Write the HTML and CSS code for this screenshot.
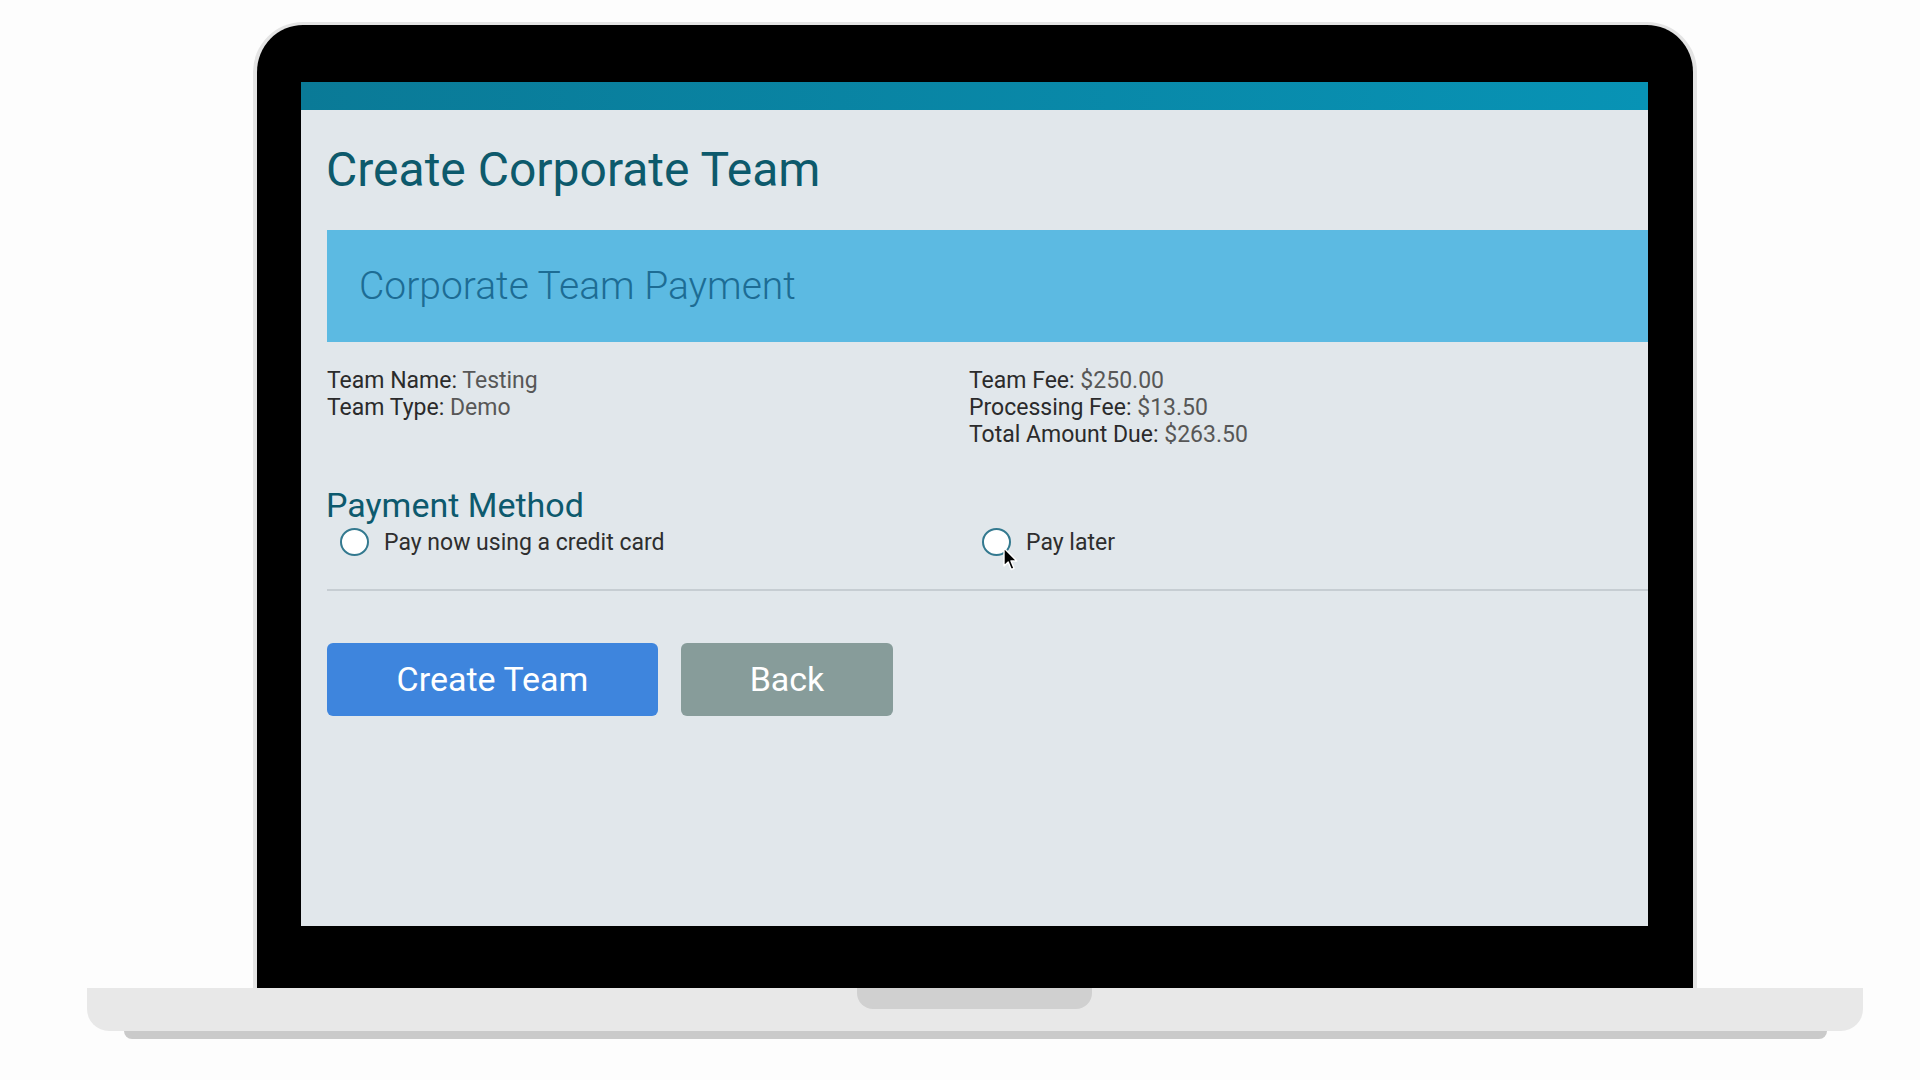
FILE: index.html
```html
<!DOCTYPE html>
<html lang="en">
<head>
<meta charset="utf-8">
<title>Create Corporate Team</title>
<link rel="stylesheet" href="styles.css">
</head>
<body>
<div class="laptop">
  <div class="lid">
    <div class="screen">
      <div class="topbar"></div>
      <main class="content">
        <h1 class="page-title">Create Corporate Team</h1>
        <section class="panel">
          <h2 class="panel-title">Corporate Team Payment</h2>
        </section>
        <div class="summary">
          <div class="summary-col">
            <div class="row"><span class="label">Team Name:</span> <span class="value">Testing</span></div>
            <div class="row"><span class="label">Team Type:</span> <span class="value">Demo</span></div>
          </div>
          <div class="summary-col">
            <div class="row"><span class="label">Team Fee:</span> <span class="value">$250.00</span></div>
            <div class="row"><span class="label">Processing Fee:</span> <span class="value">$13.50</span></div>
            <div class="row"><span class="label">Total Amount Due:</span> <span class="value">$263.50</span></div>
          </div>
        </div>
        <h3 class="method-title">Payment Method</h3>
        <div class="options">
          <label class="option"><span class="radio"></span><span class="option-text">Pay now using a credit card</span></label>
          <label class="option">
            <span class="radio"></span><span class="option-text">Pay later</span>
            <svg class="cursor" width="16" height="25" viewBox="0 0 16 25" aria-hidden="true">
              <path d="M1 1 L1 19 L5.2 15 L8.2 22.5 L11 21.3 L8 14 L13.8 14 Z" fill="#000" stroke="#fff" stroke-width="1.4" stroke-linejoin="round"/>
            </svg>
          </label>
        </div>
        <hr class="divider">
        <div class="actions">
          <button class="btn btn-primary" type="button">Create Team</button>
          <button class="btn btn-secondary" type="button">Back</button>
        </div>
      </main>
    </div>
  </div>
  <div class="base"><div class="notch"></div></div>
  <div class="base-shadow"></div>
</div>
</body>
</html>
```

FILE: styles.css
```css
* { box-sizing: border-box; }

html, body {
  margin: 0;
  padding: 0;
}

body {
  width: 1920px;
  height: 1080px;
  overflow: hidden;
  background: #fdfdfd;
  font-family: Roboto, "Liberation Sans", sans-serif;
}

/* device frame */
.laptop {
  width: 1776px;
  margin-left: 87px;
  padding-top: 22px;
  display: flex;
  flex-direction: column;
}

.lid {
  width: 1444px;
  margin: 0 auto;
  background: #000;
  border: 4px solid #e4e4e4;
  border-top-width: 3px;
  border-bottom: 0;
  border-radius: 50px 50px 0 0;
  padding: 57px 45px 62px 44px;
}

.base {
  position: relative;
  height: 43px;
  background: #e8e8e8;
  border-radius: 0 0 22px 22px;
}

.notch {
  position: absolute;
  left: 50%;
  top: 0;
  width: 235px;
  height: 21px;
  margin-left: -118px;
  background: #d0d0d0;
  border-radius: 0 0 16px 16px;
}

.base-shadow {
  width: 1703px;
  height: 8px;
  margin: 0 auto;
  background: #cacaca;
  border-radius: 0 0 8px 8px;
}

/* screen */
.screen {
  height: 844px;
  background: #e1e7eb;
  overflow: hidden;
}

.topbar {
  height: 28px;
  background: linear-gradient(90deg, #0a7a97 0%, #0893b5 100%);
}

.content {
  padding-left: 26px;
}

.page-title {
  margin: 32px 0 0 -1px;
  font-size: 48px;
  line-height: 56px;
  font-weight: 400;
  color: #0d5a6c;
}

.panel {
  margin-top: 32px;
  height: 112px;
  background: #5cbae2;
  display: flex;
  align-items: center;
  padding-left: 32px;
}

.panel-title {
  margin: 0;
  font-size: 39px;
  font-weight: 300;
  color: #1d6c94;
}

.summary {
  margin-top: 25px;
  display: grid;
  grid-template-columns: 642px 1fr;
  font-size: 23px;
  line-height: 27px;
}

.label { color: #2b2b2b; }
.value { color: #575757; }

.method-title {
  margin: 37px 0 0 -1px;
  font-size: 34px;
  line-height: 40px;
  font-weight: 400;
  color: #0d5a6e;
}

.options {
  margin-top: 3px;
  display: grid;
  grid-template-columns: 642px 1fr;
  padding-left: 13px;
}

.option {
  position: relative;
  display: flex;
  align-items: center;
  gap: 15px;
  height: 28px;
  font-size: 23px;
  color: #2e2e2e;
}

.radio {
  width: 29px;
  height: 28px;
  border-radius: 50%;
  background: #fff;
  border: 2px solid #33798f;
  flex: none;
}

.cursor {
  position: absolute;
  left: 21px;
  top: 19px;
}

.divider {
  margin: 33px 0 0;
  border: 0;
  height: 2px;
  background: #c6cdd2;
}

.actions {
  margin-top: 52px;
  display: flex;
  gap: 23px;
}

.btn {
  height: 73px;
  border: 0;
  border-radius: 6px;
  font-family: Roboto, "Liberation Sans", sans-serif;
  font-size: 34px;
  color: #fff;
  padding: 0 0 2px;
}

.btn-primary {
  width: 331px;
  background: #3e85dd;
}

.btn-secondary {
  width: 212px;
  background: #879c9a;
}
```
